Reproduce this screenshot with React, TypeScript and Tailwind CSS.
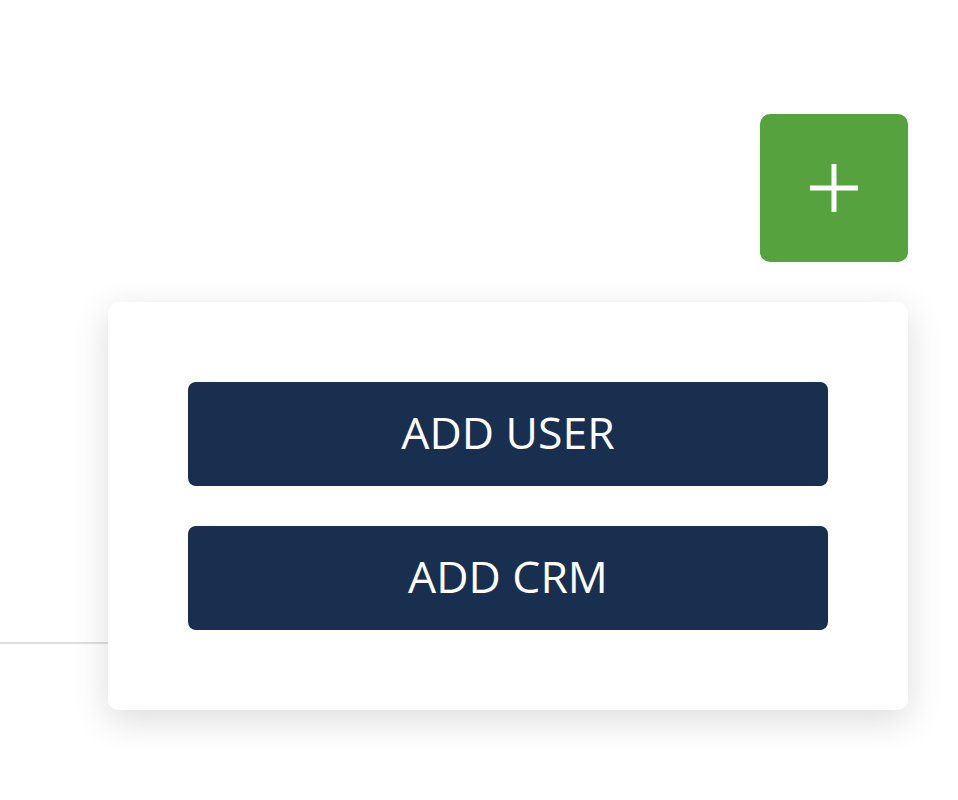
export default function App() {
  return (
    <div className="relative h-[800px] w-[958px] overflow-hidden bg-white" style={{ fontFamily: '"Open Sans", "Liberation Sans", sans-serif' }}>
      <div className="relative h-[644px]">
        <div className="flex justify-end pr-[50px] pt-[114px]">
          <button className="flex h-[148px] w-[148px] items-center justify-center rounded-[10px] bg-[#55a23e]">
            <svg width="48" height="48" viewBox="0 0 48 48" fill="none">
              <path d="M24 0V48M0 24H48" stroke="white" strokeWidth="5" />
            </svg>
          </button>
        </div>
        <div className="absolute bottom-0 left-0 h-[2px] w-[400px] bg-[#dedede]" />
      </div>
      <div className="absolute right-[50px] top-[302px] flex w-[800px] flex-col gap-[40px] rounded-[10px] bg-white p-[80px] shadow-[0_10px_36px_rgba(0,0,0,0.14)]">
        <button className="flex h-[104px] items-center justify-center rounded-[8px] bg-[#182f4f] pb-[4px] text-[44.5px] leading-none text-white">
          ADD USER
        </button>
        <button className="flex h-[104px] items-center justify-center rounded-[8px] bg-[#182f4f] pb-[4px] text-[44.5px] leading-none text-white">
          ADD CRM
        </button>
      </div>
    </div>
  );
}
